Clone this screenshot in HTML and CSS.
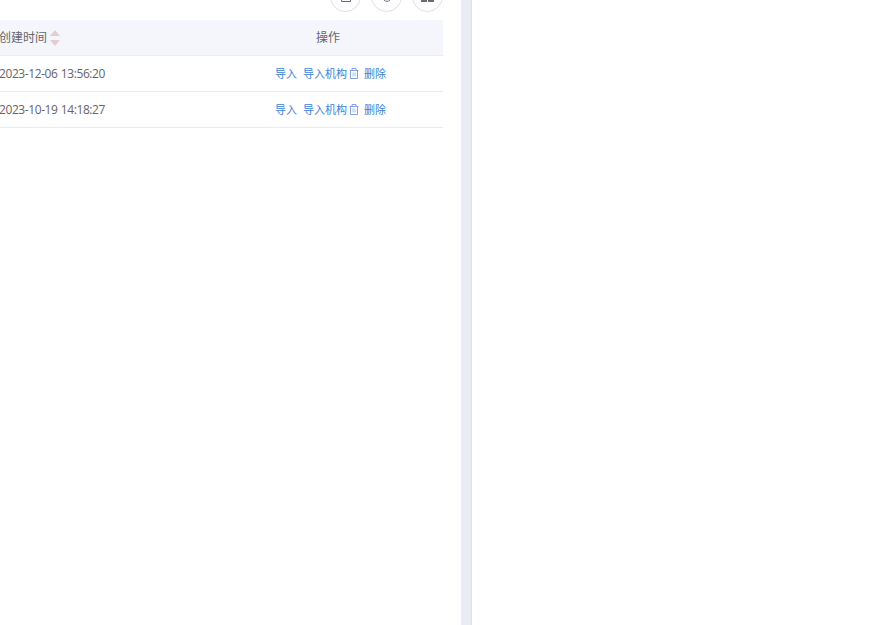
FILE: index.html
```html
<!DOCTYPE html>
<html lang="zh-CN">
<head>
  <meta charset="UTF-8">
  <meta name="viewport" content="width=device-width, initial-scale=1.0">
  <link rel="stylesheet" href="styles.css">
</head>
<body>

<svg class="symbols">
  <symbol id="delete" viewBox="0 0 10 11">
    <path d="M0.5 2.5h9M3 2.5v-2h4v2M1.5 2.5v8h7v-8" fill="none" stroke="#8c9de2"/>
    <path d="M4 4.5v4M6 4.5v4" fill="none" stroke="#91c9f8"/>
  </symbol>
</svg>

<div class="page">
  <div class="left-panel">
    <div class="toolbar">
      <button class="circle-btn" title="导出">
        <svg width="12" height="12" viewBox="0 0 12 12"><path d="M1.5 1.5h9v9h-9z" fill="none" stroke="#6d6775"/></svg>
      </button>
      <button class="circle-btn" title="刷新">
        <svg width="12" height="12" viewBox="0 0 12 12"><circle cx="6" cy="6" r="4.3" fill="none" stroke="#777080"/></svg>
      </button>
      <button class="circle-btn" title="列">
        <svg width="13" height="12" viewBox="0 0 13 12"><path d="M0 0h6v5h-6zM7 0h6v5h-6zM0 6h6v5h-6zM7 6h6v5h-6z" fill="#706872"/></svg>
      </button>
    </div>

    <div class="table">
      <div class="row header">
        <div class="cell time">创建时间
          <span class="sort"><i class="up"></i><i class="down"></i></span>
        </div>
        <div class="cell action">操作</div>
      </div>
      <div class="row">
        <div class="cell time date">2023-12-06 13:56:20</div>
        <div class="cell action links">
          <a class="link">导入</a>
          <a class="link">导入机构</a>
          <a class="link delete"><svg class="icon"><use href="#delete"/></svg>删除</a>
        </div>
      </div>
      <div class="row">
        <div class="cell time date">2023-10-19 14:18:27</div>
        <div class="cell action links">
          <a class="link">导入</a>
          <a class="link">导入机构</a>
          <a class="link delete"><svg class="icon"><use href="#delete"/></svg>删除</a>
        </div>
      </div>
    </div>
  </div>
  <div class="divider"></div>
  <div class="right-panel"></div>
</div>

</body>
</html>
```
FILE: styles.css
```css
* {
  box-sizing: border-box;
}

body {
  margin: 0;
  overflow: hidden;
  background: #fff;
  color: #65656b;
  font-family: "Open Sans", "Noto Sans CJK SC", sans-serif;
  font-size: 12px;
}

.symbols {
  display: none;
}

.page {
  display: flex;
  height: 100vh;
}

.left-panel {
  width: 461px;
  padding-right: 18px;
}

.divider {
  width: 11px;
  background: #e9ecf5;
  border-right: 1px solid #d5e2f8;
}

.right-panel {
  flex: 1;
}

/* Only the lower part of the round buttons is visible */
.toolbar {
  display: flex;
  justify-content: flex-end;
  align-items: flex-end;
  gap: 10px;
  height: 20px;
  padding-bottom: 8px;
}

.circle-btn {
  display: flex;
  align-items: center;
  justify-content: center;
  width: 31px;
  height: 31px;
  padding: 0;
  border: 1px solid #dddee8;
  border-radius: 50%;
  background: #fff;
}

.row {
  display: flex;
  height: 36px;
  border-bottom: 1px solid #e9ebf1;
}

.header {
  background: #f5f6fb;
}

.cell {
  display: flex;
  align-items: center;
  line-height: 18px;
  white-space: nowrap;
}

.time {
  width: 213px;
  margin-left: -1px;
}

.date {
  letter-spacing: -0.41px;
  word-spacing: 0.6px;
}

.action {
  flex: 1;
  justify-content: center;
  padding-left: 1px;
}

.links {
  padding-left: 0;
}

.sort {
  display: flex;
  flex-direction: column;
  gap: 4px;
  margin-left: 3px;
}

.up,
.down {
  border: 5px solid transparent;
}

.up {
  border-top: 0;
  border-bottom: 6px solid #e5ccd2;
}

.down {
  border-bottom: 0;
  border-top: 6px solid #e5ccd2;
}

.link {
  display: flex;
  align-items: center;
  color: #3a83d8;
  font-size: 11px;
  margin-left: 6px;
}

.delete {
  margin-left: 2px;
}

.icon {
  width: 10px;
  height: 11px;
  margin: 0 5px 1px 0;
}
```
